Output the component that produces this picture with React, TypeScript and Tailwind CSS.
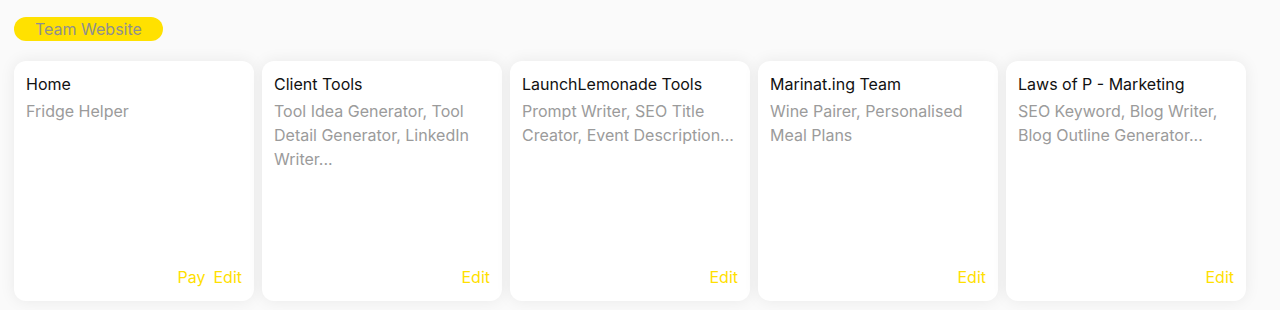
import React from "react";

interface Project {
  title: string;
  tools: string;
  actions: string[];
}

const projects: Project[] = [
  { title: "Home", tools: "Fridge Helper", actions: ["Pay", "Edit"] },
  {
    title: "Client Tools",
    tools: "Tool Idea Generator, Tool Detail Generator, LinkedIn Writer...",
    actions: ["Edit"],
  },
  {
    title: "LaunchLemonade Tools",
    tools: "Prompt Writer, SEO Title Creator, Event Description...",
    actions: ["Edit"],
  },
  {
    title: "Marinat.ing Team",
    tools: "Wine Pairer, Personalised Meal Plans",
    actions: ["Edit"],
  },
  {
    title: "Laws of P - Marketing",
    tools: "SEO Keyword, Blog Writer, Blog Outline Generator...",
    actions: ["Edit"],
  },
];

function ProjectCard({ title, tools, actions }: Project) {
  return (
    <div className="flex h-[240px] w-[240px] flex-col rounded-xl bg-white px-3 pt-[11px] pb-3 shadow-[0_0_16px_rgba(0,0,0,0.07)]">
      <div className="text-base leading-6 text-[#111111]">{title}</div>
      <div className="mt-[3px] text-base leading-6 text-[#9b9b9b]">{tools}</div>
      <div className="mt-auto flex justify-end gap-2 text-base leading-6 text-[#ffe000]">
        {actions.map((a) => (
          <span key={a} className="cursor-pointer">
            {a}
          </span>
        ))}
      </div>
    </div>
  );
}

export default function App() {
  return (
    <div
      className="h-[310px] w-full bg-[#fafafa] pt-[17px] pl-[14px]"
      style={{ fontFamily: "Inter, 'Noto Sans', sans-serif" }}
    >
      <div className="inline-flex h-6 items-center rounded-full bg-[#ffe100] px-[21px] text-base text-[#8f8f8f]">
        Team Website
      </div>
      <div className="mt-5 flex gap-2">
        {projects.map((p) => (
          <ProjectCard key={p.title} {...p} />
        ))}
      </div>
    </div>
  );
}
